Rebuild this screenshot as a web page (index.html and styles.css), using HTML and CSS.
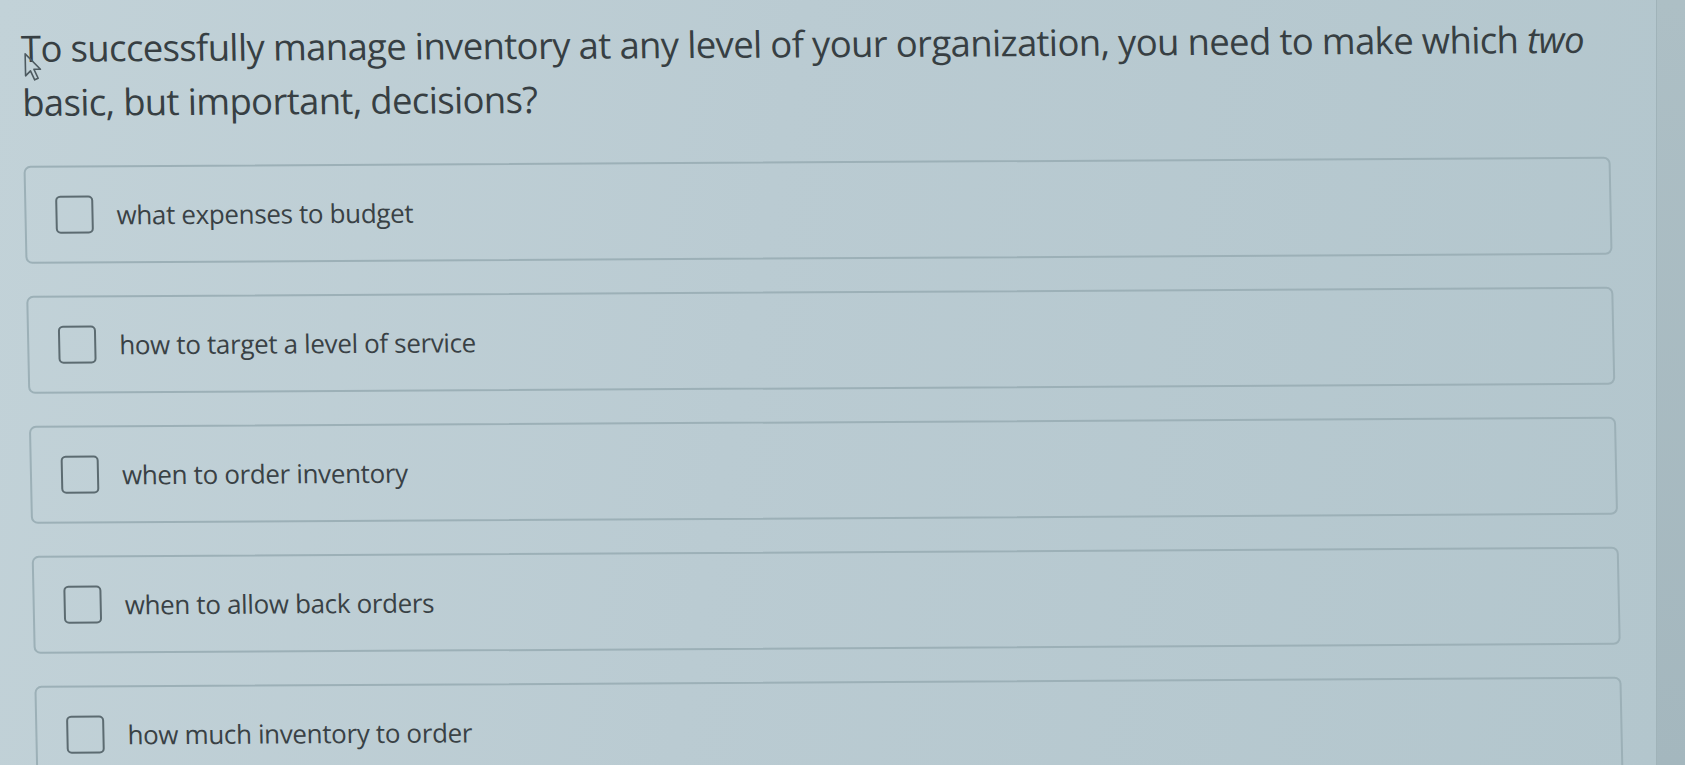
FILE: index.html
```html
<!DOCTYPE html>
<html lang="en">
<head>
<meta charset="utf-8">
<title>Inventory question</title>
<link rel="stylesheet" href="styles.css">
</head>
<body>
<div class="screen">
  <main class="page">
    <div class="content">
      <div class="question-wrap">
        <p class="question">To successfully manage inventory at any level of your organization, you need to make which <em>two</em> basic, but important, decisions?</p>
        <svg class="cursor" width="22" height="30" viewBox="0 0 22 30" aria-hidden="true">
          <path d="M2 2 L2 24 L7 19 L11 28 L14.5 26.5 L10.5 17.5 L17 17.5 Z" fill="none" stroke="#4d5a60" stroke-width="1.6" stroke-linejoin="round"/>
        </svg>
      </div>
      <ul class="options">
        <li class="option"><span class="box"></span><span class="label">what expenses to budget</span></li>
        <li class="option"><span class="box"></span><span class="label">how to target a level of service</span></li>
        <li class="option"><span class="box"></span><span class="label">when to order inventory</span></li>
        <li class="option"><span class="box"></span><span class="label">when to allow back orders</span></li>
        <li class="option"><span class="box"></span><span class="label">how much inventory to order</span></li>
      </ul>
    </div>
  </main>
  <div class="edge"></div>
</div>
</body>
</html>
```

FILE: styles.css
```css
html, body {
  margin: 0;
  padding: 0;
  height: 100%;
  overflow: hidden;
}

body {
  background: #a9bdc4;
  font-family: "Open Sans", "Noto Sans", "DejaVu Sans", sans-serif;
  color: #3b4347;
}

.screen {
  display: flex;
  width: 1685px;
  height: 765px;
}

.page {
  width: 1656px;
  flex: none;
  height: 765px;
  overflow: hidden;
  background: linear-gradient(100deg, #c2d2d8 0%, #bacbd2 45%, #b3c6cd 100%);
}

.content {
  transform: matrix(1, -0.0058, 0.021, 1, 0, 0);
  transform-origin: 0 0;
}

.edge {
  flex: 1;
  background: linear-gradient(180deg, #adbfc5 0%, #a4b7be 100%);
  border-left: 1px solid #a0b3b9;
}

.question-wrap {
  position: relative;
  padding: 21px 40px 0 20px;
}

.question {
  margin: 0;
  font-size: 36.5px;
  line-height: 54px;
  letter-spacing: -0.66px;
  color: #373f43;
  width: 1600px;
}

.question em {
  font-style: italic;
}

.cursor {
  position: absolute;
  left: 22px;
  top: 52px;
}

.options {
  list-style: none;
  margin: 37px 0 0 0;
  padding: 0 0 0 20px;
  display: flex;
  flex-direction: column;
  gap: 32px;
}

.option {
  box-sizing: border-box;
  width: 1587px;
  height: 98px;
  border: 2px solid #9cb0b7;
  border-radius: 7px;
  display: flex;
  align-items: center;
  padding-left: 29px;
  gap: 23px;
  flex: none;
}

.box {
  box-sizing: border-box;
  width: 38px;
  height: 38px;
  border: 2.5px solid #5c6b71;
  border-radius: 5px;
  flex: none;
}

.label {
  font-size: 26px;
  letter-spacing: -0.35px;
  color: #394145;
}
```
